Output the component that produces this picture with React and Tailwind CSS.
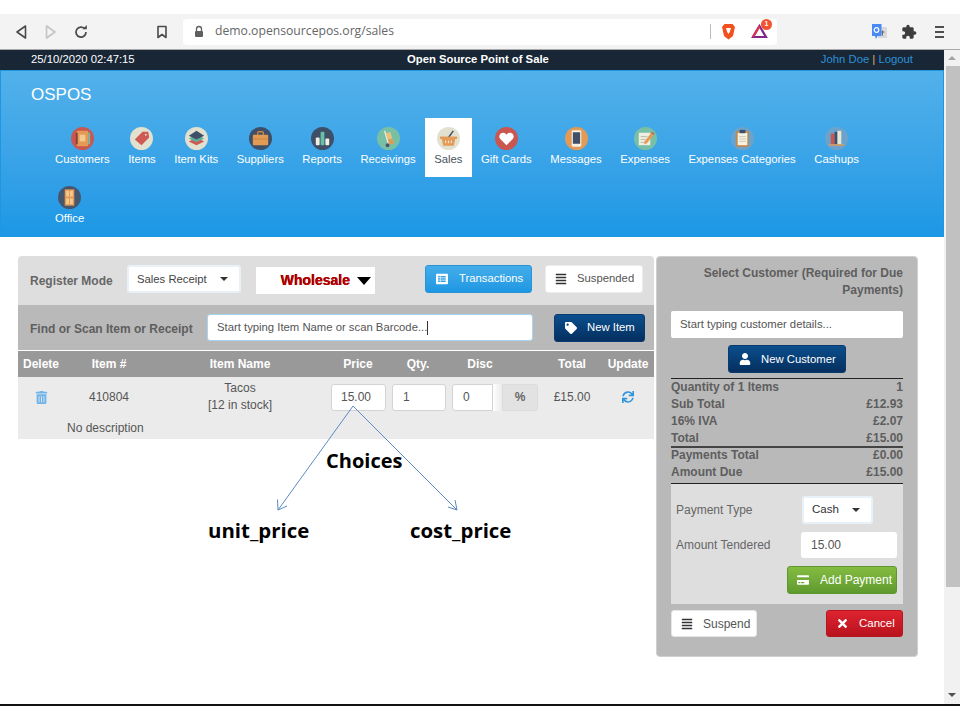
import { FaAlignJustify, FaCreditCard, FaListAlt, FaSync, FaTag, FaTimes, FaTrashAlt, FaUser } from 'react-icons/fa';

const NAV_ITEMS = [
  { label: 'Customers', icon: 'customers' },
  { label: 'Items', icon: 'items' },
  { label: 'Item Kits', icon: 'kits' },
  { label: 'Suppliers', icon: 'suppliers' },
  { label: 'Reports', icon: 'reports' },
  { label: 'Receivings', icon: 'receivings' },
  { label: 'Sales', icon: 'sales', active: true },
  { label: 'Gift Cards', icon: 'gift' },
  { label: 'Messages', icon: 'messages' },
  { label: 'Expenses', icon: 'expenses' },
  { label: 'Expenses Categories', icon: 'categories' },
  { label: 'Cashups', icon: 'cashups' },
  { label: 'Office', icon: 'office' },
];

const NAV_ART = {
  customers: (
    <>
      <circle cx="12" cy="12" r="12" fill="#c9574f" />
      <rect x="6" y="4" width="12" height="16" rx="1" fill="#e39a55" />
      <rect x="9" y="8" width="6" height="7" fill="#f4c98f" />
      <rect x="5" y="6" width="2" height="12" fill="#8a3f3a" />
      <rect x="18" y="6" width="2" height="12" fill="#7fb7a0" />
    </>
  ),
  items: (
    <>
      <circle cx="12" cy="12" r="12" fill="#e2e0cf" />
      <path d="M5 13 13 5l6 0 1 6-8 8z" fill="#cf5a55" />
      <circle cx="16.5" cy="8" r="1" fill="#e2e0cf" />
    </>
  ),
  kits: (
    <>
      <circle cx="12" cy="12" r="12" fill="#e2e0cf" />
      <path d="M4 15 12 11l8 4-8 4z" fill="#cf5a55" />
      <path d="M4 12 12 8l8 4-8 4z" fill="#5fae9a" />
      <path d="M4 9 12 4l8 5-8 4z" fill="#3f4f68" />
    </>
  ),
  suppliers: (
    <>
      <circle cx="12" cy="12" r="12" fill="#3f4f68" />
      <rect x="9" y="5" width="6" height="4" rx="1" fill="none" stroke="#c9853f" strokeWidth="1.4" />
      <rect x="4" y="8" width="16" height="11" rx="1" fill="#e39a55" />
      <rect x="4" y="12" width="16" height="1" fill="#c9853f" />
    </>
  ),
  reports: (
    <>
      <circle cx="12" cy="12" r="12" fill="#3f4f68" />
      <rect x="5" y="11" width="4" height="8" rx="1" fill="#f0efe4" />
      <rect x="10" y="5" width="4" height="14" rx="1" fill="#66bfa6" />
      <rect x="15" y="12" width="4" height="7" rx="1" fill="#f0efe4" />
    </>
  ),
  receivings: (
    <>
      <circle cx="12" cy="12" r="12" fill="#78c0a5" />
      <path d="M8 4l4 14" stroke="#f0efe4" strokeWidth="1.4" />
      <rect x="10" y="6" width="5" height="7" fill="#e8c27a" transform="rotate(-15 12 9)" />
      <rect x="12" y="13" width="5" height="5" fill="#e39a55" transform="rotate(-15 14 15)" />
      <circle cx="11" cy="19" r="2" fill="#4a5568" />
    </>
  ),
  sales: (
    <>
      <circle cx="12" cy="12" r="12" fill="#e2e0cf" />
      <path d="M12 11 17 4" stroke="#3f4f68" strokeWidth="1.5" />
      <rect x="3" y="10" width="18" height="2.5" fill="#e39a55" />
      <path d="M5 12.5h14l-1.5 7h-11z" fill="#e39a55" />
      <path d="M9 14v3M12 14v3M15 14v3" stroke="#f4e3c8" strokeWidth="1.2" />
    </>
  ),
  gift: (
    <>
      <circle cx="12" cy="12" r="12" fill="#c9574f" />
      <path d="M12 19 5.5 12.5C3 9.5 5.5 6 8.5 6c1.5 0 2.800.8 3.500 2 .7-1.200 2-2 3.500-2 3 0 5.500 3.500 3 6.500z" fill="#fff" />
    </>
  ),
  messages: (
    <>
      <circle cx="12" cy="12" r="12" fill="#e39a55" />
      <rect x="7" y="3.500" width="10" height="17" rx="1.500" fill="#f4f1e6" />
      <rect x="8.200" y="5.500" width="7.600" height="12" fill="#3f4f68" />
    </>
  ),
  expenses: (
    <>
      <circle cx="12" cy="12" r="12" fill="#78c0a5" />
      <rect x="5" y="6" width="12" height="13" fill="#efeee2" />
      <path d="M7 10h7M7 13h5M7 16h4" stroke="#b9b8a8" strokeWidth="1" />
      <path d="M11 15 18 6l2.500 2-7 9-3 1z" fill="#e39a55" />
      <path d="M18 6l1-1 2.500 2-1 1z" fill="#c9574f" />
    </>
  ),
  categories: (
    <>
      <circle cx="12" cy="12" r="12" fill="#6da3cb" />
      <rect x="5.500" y="4.500" width="13" height="16" rx="1" fill="#c9853f" />
      <rect x="7" y="6" width="10" height="13" fill="#f6f3e6" />
      <rect x="9" y="3" width="6" height="3.500" fill="#3f4f68" />
      <path d="M8.500 10h7M8.500 12.500h7M8.500 15h7" stroke="#c9c7b4" strokeWidth="1" />
    </>
  ),
  cashups: (
    <>
      <circle cx="12" cy="12" r="12" fill="#6da3cb" />
      <rect x="6" y="7" width="4" height="11" fill="#c9574f" />
      <rect x="10" y="5" width="3" height="13" fill="#3f4f68" />
      <rect x="13" y="4" width="4" height="14" fill="#e8e6d8" />
      <rect x="4" y="18" width="16" height="1.500" fill="#e39a55" />
    </>
  ),
  office: (
    <>
      <circle cx="12" cy="12" r="12" fill="#46566f" />
      <rect x="7" y="3.500" width="10" height="17" fill="#e39a55" />
      <rect x="8.500" y="5" width="3" height="6" fill="#f4c98f" />
      <rect x="12.500" y="5" width="3" height="6" fill="#f4c98f" />
      <rect x="8.500" y="13" width="3" height="6" fill="#f4c98f" />
      <rect x="12.500" y="13" width="3" height="6" fill="#f4c98f" />
    </>
  ),
};

function NavIcon({ name }) {
  return (
    <svg className="mt-[9px] h-[23px] w-[23px]" viewBox="0 0 24 24" aria-hidden>
      {NAV_ART[name]}
    </svg>
  );
}

function Caret() {
  return <span className="block h-0 w-0 border-x-[4px] border-t-[4px] border-x-transparent border-t-[#333]" />;
}

function BrowserBar() {
  return (
    <div className="flex h-[36px] items-center border-b border-[#a9a9a9] bg-[#f3f3f3]">
      <div className="flex w-[30px] ml-[6px] justify-center">
        <svg width="14" height="16" viewBox="0 0 14 16" aria-hidden>
          <path d="M11.500 2 3 8l8.500 6z" fill="none" stroke="#4a4a4a" strokeWidth="1.600" strokeLinejoin="round" />
        </svg>
      </div>
      <div className="flex w-[30px] justify-center">
        <svg width="14" height="16" viewBox="0 0 14 16" aria-hidden>
          <path d="M2.500 2 11 8l-8.500 6z" fill="none" stroke="#c4c4c4" strokeWidth="1.600" strokeLinejoin="round" />
        </svg>
      </div>
      <div className="flex w-[30px] justify-center">
        <svg width="16" height="16" viewBox="0 0 16 16" aria-hidden>
          <path d="M13 8a5 5 0 1 1-1.500-3.500" fill="none" stroke="#4a4a4a" strokeWidth="1.700" />
          <path d="M9.500 5.200h4.300V1z" fill="#4a4a4a" />
        </svg>
      </div>
      <div className="ml-[51px] flex w-[30px] justify-center">
        <svg width="12" height="14" viewBox="0 0 12 14" aria-hidden>
          <path d="M2 1.500h8v11L6 9.500l-4 3z" fill="none" stroke="#4a4a4a" strokeWidth="1.600" strokeLinejoin="round" />
        </svg>
      </div>
      <div className="ml-[6px] flex h-[26px] w-[594px] items-center rounded-[4px] bg-white pl-[10px]">
        <svg width="12" height="13" viewBox="0 0 12 13" aria-hidden>
          <path d="M3.500 6V4a2.500 2.500 0 0 1 5 0v2" fill="none" stroke="#5f5f5f" strokeWidth="1.300" />
          <rect x="2" y="6" width="8" height="6" rx="1" fill="#5f5f5f" />
        </svg>
        <span className="ml-[10px] font-['Open_Sans',sans-serif] text-[12.2px] text-[#666]">demo.opensourcepos.org/sales</span>
        <span className="ml-auto h-[15px] w-[1px] bg-[#bdbdbd]" />
        <svg className="ml-[10px]" width="15" height="17" viewBox="0 0 15 17" aria-hidden>
          <path d="M3.500 1h8L14 4l-.5 2-1.500 7-4.500 3.500L3 13 1.500 6 1 4z" fill="#f1501f" />
          <path d="M5 5h5L8.800 9l-1.300 2-1.300-2z" fill="#fff" />
        </svg>
        <div className="relative ml-[15px] mr-[9px] w-[17px]">
          <svg width="17" height="15" viewBox="0 0 17 15" aria-hidden>
            <path d="M8.500 2 15 13H2z" fill="none" stroke="#7d2a8c" strokeWidth="2.200" />
            <path d="M2 13 8.500 2" stroke="#e0314f" strokeWidth="2.200" />
          </svg>
          <span className="absolute left-[10px] top-[-5px] flex h-[11px] w-[11px] items-center justify-center rounded-full bg-[#f4512c] text-[7px] font-bold text-white">1</span>
        </div>
      </div>
      <div className="ml-[87px] flex w-[30px] justify-center">
        <svg width="16" height="16" viewBox="0 0 16 16" aria-hidden>
          <rect x="7" y="3" width="9" height="11" fill="#d9d9d9" />
          <path d="M11.500 6.500v5M9.500 8h4" stroke="#6b6b6b" strokeWidth="1" />
          <path d="M1 0h9.500v12H6.500L5 15l-1-3H1z" fill="#4a8af4" />
          <circle cx="5.500" cy="6" r="2.300" fill="none" stroke="#fff" strokeWidth="1.200" />
        </svg>
      </div>
      <div className="flex w-[30px] justify-center">
        <svg width="16" height="16" viewBox="0 0 24 24" fill="#3d3d3d" aria-hidden>
          <path d="M20.500 11H19V7c0-1.100-.9-2-2-2h-4V3.500C13 2.120 11.880 1 10.500 1S8 2.120 8 3.500V5H4c-1.100 0-1.990.9-1.990 2v3.800H3.500c1.490 0 2.700 1.210 2.700 2.700s-1.210 2.700-2.700 2.700H2V20c0 1.100.9 2 2 2h3.800v-1.500c0-1.490 1.210-2.700 2.700-2.700 1.490 0 2.700 1.210 2.700 2.700V22H17c1.100 0 2-.9 2-2v-4h1.500c1.380 0 2.500-1.120 2.500-2.500S21.880 11 20.500 11z" />
        </svg>
      </div>
      <div className="flex w-[30px] flex-col items-center gap-[3px]">
        <span className="h-[2px] w-[9px] bg-[#4f4f4f]" />
        <span className="h-[2px] w-[9px] bg-[#4f4f4f]" />
        <span className="h-[2px] w-[9px] bg-[#4f4f4f]" />
      </div>
    </div>
  );
}

function Header() {
  return (
    <header className="h-[167px] border-x border-b border-t border-[#1e96e2] bg-linear-to-b from-[#52b1ea] to-[#1b97e5]">
      <div className="flex h-[47px] items-center pl-[30px] text-[17px] text-white">OSPOS</div>
      <nav className="flex w-[880px] flex-wrap pl-[44.750px]">
        {NAV_ITEMS.map((item) => (
          <div
            key={item.label}
            className={`flex h-[59px] flex-col items-center px-[9.250px] ${item.active ? 'bg-white text-[#4a5260]' : 'text-white'}`}
          >
            <NavIcon name={item.icon} />
            <span className="mt-[1px] text-[11.300px] leading-[17px]">{item.label}</span>
          </div>
        ))}
      </nav>
    </header>
  );
}

function FlatInput({ className, children }) {
  return (
    <div className={`flex items-center rounded-[3px] border border-[#d3d3d3] bg-white text-[12px] text-[#555] ${className}`}>
      {children}
    </div>
  );
}

function RegisterPanel() {
  return (
    <div className="w-[636px]">
      <div className="flex h-[49px] items-center rounded-t-[4px] bg-[#dedede] pl-[12px] text-[11.300px] text-[#555]">
        <span className="w-[97px] text-[12px] font-bold text-[#666]">Register Mode</span>
        <div className="mb-[3px] flex h-[28px] w-[114px] items-center rounded-[3px] border-2 border-[#e9f1f8] bg-white pl-[8px] text-[#444]">
          Sales Receipt
          <span className="ml-[13px]"><Caret /></span>
        </div>
        <div className="ml-[15px] flex h-[27px] w-[119px] items-center bg-white pl-[25px]">
          <span className="text-[14px] font-bold text-[#c40000] [text-shadow:-0.500px_0_0_#400]">Wholesale</span>
          <span className="ml-[7px] h-0 w-0 border-x-[7px] border-t-[8px] border-x-transparent border-t-black" />
        </div>
        <div className="mb-[4px] ml-[50px] flex h-[28px] w-[107px] items-center rounded-[3px] border border-[#2a93d8] bg-linear-to-b from-[#44ade9] to-[#1d97e3] pl-[10px] text-white">
          <FaListAlt size={12} />
          <span className="ml-[11px]">Transactions</span>
        </div>
        <div className="mb-[4px] ml-[13px] flex h-[28px] w-[98px] items-center rounded-[3px] border border-[#ececec] bg-white pl-[9px]">
          <FaAlignJustify size={12} className="text-[#333]" />
          <span className="ml-[10px]">Suspended</span>
        </div>
      </div>
      <div className="flex h-[45px] items-center bg-[#b9b9b9] pl-[12px] text-[11.300px]">
        <span className="w-[177px] pt-[3px] text-[12px] font-bold text-[#5e5e5e]">Find or Scan Item or Receipt</span>
        <div className="flex h-[27px] w-[326px] items-center rounded-[3px] border border-[#a9d4ef] bg-white pl-[9px] text-[#555]">
          Start typing Item Name or scan Barcode...<span className="h-[14px] w-[1px] bg-[#333]" />
        </div>
        <div className="ml-[21px] flex h-[28px] w-[91px] items-center rounded-[3px] border border-[#0a3b70] bg-linear-to-b from-[#0b4f8d] to-[#052f5f] pl-[10px] text-white">
          <FaTag size={12} />
          <span className="ml-[10px]">New Item</span>
        </div>
      </div>
      <div className="mt-[1px] grid h-[26px] grid-cols-[46px_90px_172px_64px_56px_94px_64px_50px] items-center bg-[#999] text-center text-[12px] font-bold text-white">
        <span>Delete</span>
        <span>Item #</span>
        <span>Item Name</span>
        <span>Price</span>
        <span>Qty.</span>
        <span className="pr-[26px]">Disc</span>
        <span>Total</span>
        <span className="pr-[2px]">Update</span>
      </div>
      <div className="h-[62px] bg-[#ebebeb] text-[12px] text-[#555]">
        <div className="grid h-[40px] grid-cols-[46px_90px_172px_64px_56px_94px_64px_50px] items-center text-center">
          <div className="flex justify-center text-[#6fb4ea]"><FaTrashAlt size={13} /></div>
          <span>410804</span>
          <div className="leading-[17px]">
            <div>Tacos</div>
            <div>[12 in stock]</div>
          </div>
          <FlatInput className="ml-[5px] h-[27px] w-[55px] pl-[9px]">15.00</FlatInput>
          <FlatInput className="ml-[2px] h-[27px] w-[54px] pl-[10px]">1</FlatInput>
          <div className="ml-[6px] flex h-[27px] w-[86px] items-center">
            <FlatInput className="h-full w-[41px] rounded-r-none pl-[10px]">0</FlatInput>
            <span className="h-full w-[9px] bg-linear-to-r from-white to-[#ebebeb]" />
            <div className="flex h-full flex-1 items-center justify-center rounded-r-[3px] border border-[#dcdcdc] bg-[#e2e2e2] font-bold text-[#666]">%</div>
          </div>
          <span>£15.00</span>
          <div className="flex justify-center pr-[2px] text-[#2f94dc]"><FaSync size={12} /></div>
        </div>
        <div className="pl-[49px] pt-[2px]">No description</div>
      </div>
    </div>
  );
}

function SummaryRow({ label, value }) {
  return (
    <div className="flex h-[17px] items-center justify-between">
      <span>{label}</span>
      <span>{value}</span>
    </div>
  );
}

function CustomerPanel() {
  return (
    <aside className="ml-[2px] h-[401px] w-[262px] rounded-[4px] border border-[#cfcfcf] bg-[#b9b9b9] px-[14px] pt-[8px] text-[12px]">
      <div className="text-right font-bold leading-[17px] text-[#5e5e5e]">
        Select Customer (Required for Due Payments)
      </div>
      <div className="mt-[12px] flex h-[27px] items-center rounded-[2px] bg-white pl-[9px] text-[11.300px] text-[#555]">
        Start typing customer details...
      </div>
      <div className="mt-[7px] flex justify-center">
        <div className="flex h-[28px] w-[118px] items-center rounded-[3px] border border-[#0a3b70] bg-linear-to-b from-[#0b4f8d] to-[#052f5f] pl-[10px] text-[11.300px] text-white">
          <FaUser size={12} />
          <span className="ml-[10px]">New Customer</span>
        </div>
      </div>
      <div className="mt-[5px] border-t border-[#222] font-bold text-[#5e5e5e]">
        <div className="-mt-[1px]">
          <SummaryRow label="Quantity of 1 Items" value="1" />
          <SummaryRow label="Sub Total" value="£12.93" />
          <SummaryRow label="16% IVA" value="£2.07" />
          <SummaryRow label="Total" value="£15.00" />
        </div>
        <div className="border-t-2 border-[#444]">
          <div className="-mt-[2px]">
            <SummaryRow label="Payments Total" value="£0.00" />
            <SummaryRow label="Amount Due" value="£15.00" />
          </div>
        </div>
      </div>
      <div className="mt-[3px] h-[121px] border-t border-[#222] bg-[#dedede] px-[5px] text-[#666]">
        <div className="mt-[12px] flex h-[28px] items-center">
          <span className="w-[126px]">Payment Type</span>
          <div className="flex h-[28px] w-[71px] items-center rounded-[3px] border-2 border-[#e9f1f8] bg-white pl-[8px] text-[11.500px] text-[#333]">
            Cash
            <span className="ml-[13px]"><Caret /></span>
          </div>
        </div>
        <div className="mt-[8px] flex h-[26px] items-center">
          <span className="w-[125px]">Amount Tendered</span>
          <div className="flex h-[26px] w-[96px] items-center rounded-[3px] bg-white pl-[10px] text-[#555]">15.00</div>
        </div>
        <div className="mt-[8px] flex justify-end pr-[1px]">
          <div className="flex h-[28px] w-[110px] items-center rounded-[3px] border border-[#5e9632] bg-linear-to-b from-[#84bc41] to-[#5f9a2f] pl-[9px] text-white">
            <FaCreditCard size={12} />
            <span className="ml-[11px]">Add Payment</span>
          </div>
        </div>
      </div>
      <div className="mt-[6px] flex justify-between">
        <div className="flex h-[27px] w-[86px] items-center rounded-[3px] border border-[#e6e6e6] bg-white pl-[9px] text-[#555]">
          <FaAlignJustify size={12} className="text-[#333]" />
          <span className="ml-[10px]">Suspend</span>
        </div>
        <div className="flex h-[27px] w-[77px] items-center rounded-[3px] border border-[#b8151f] bg-linear-to-b from-[#de2430] to-[#b8121d] pl-[9px] text-[11.500px] text-white">
          <FaTimes size={13} />
          <span className="ml-[10px]">Cancel</span>
        </div>
      </div>
    </aside>
  );
}

function Scrollbar() {
  return (
    <div className="flex w-[16px] flex-col items-center bg-[#f1f1f1]">
      <span className="mt-[6px] h-0 w-0 border-x-[4px] border-b-[4px] border-x-transparent border-b-[#a3a3a3]" />
      <div className="ml-[2px] mt-[6px] h-[521px] w-[14px] bg-[#c1c1c1]" />
      <span className="mt-[106px] h-0 w-0 border-x-[4px] border-t-[4px] border-x-transparent border-t-[#505050]" />
    </div>
  );
}

// drawn-on notes from the original screenshot, they sit over the page
function Annotation() {
  return (
    <>
      <svg className="pointer-events-none absolute left-0 top-0" width="960" height="720" aria-hidden>
        <g fill="none" stroke="#5b8ac2" strokeWidth="1">
          <path d="M353 406 278 510" />
          <path d="M277.500 499.500 278 510 287 506" />
          <path d="M353 406 457 510" />
          <path d="M448 507 457 510 455 500" />
        </g>
      </svg>
      <span className="absolute left-[326px] top-[447px] font-['Open_Sans',sans-serif] text-[20px] font-bold leading-[28px] text-black">Choices</span>
      <span className="absolute left-[208px] top-[516px] font-['Open_Sans',sans-serif] text-[20.400px] font-bold leading-[28px] text-black">unit_price</span>
      <span className="absolute left-[410px] top-[516px] font-['Open_Sans',sans-serif] text-[20.400px] font-bold leading-[28px] text-black">cost_price</span>
    </>
  );
}

export default function App() {
  return (
    <div className="relative h-[720px] w-[960px] overflow-hidden bg-white font-['Liberation_Sans',sans-serif]">
      <div className="h-[14px]" />
      <BrowserBar />
      <div className="flex h-[656px] border-b-2 border-[#111]">
        <main className="flex-1">
          <div className="flex h-[20px] items-center bg-[#182635] pb-[2px] text-[11.300px] text-white">
            <span className="w-[407px] pl-[31px]">25/10/2020 02:47:15</span>
            <span className="font-bold">Open Source Point of Sale</span>
            <span className="ml-auto pr-[31px] text-[#2d8fd6]">
              John Doe <span className="text-[#e0b060]">|</span> Logout
            </span>
          </div>
          <Header />
          <div className="flex pl-[18px] pt-[19px]">
            <RegisterPanel />
            <CustomerPanel />
          </div>
        </main>
        <Scrollbar />
      </div>
      <Annotation />
    </div>
  );
}
